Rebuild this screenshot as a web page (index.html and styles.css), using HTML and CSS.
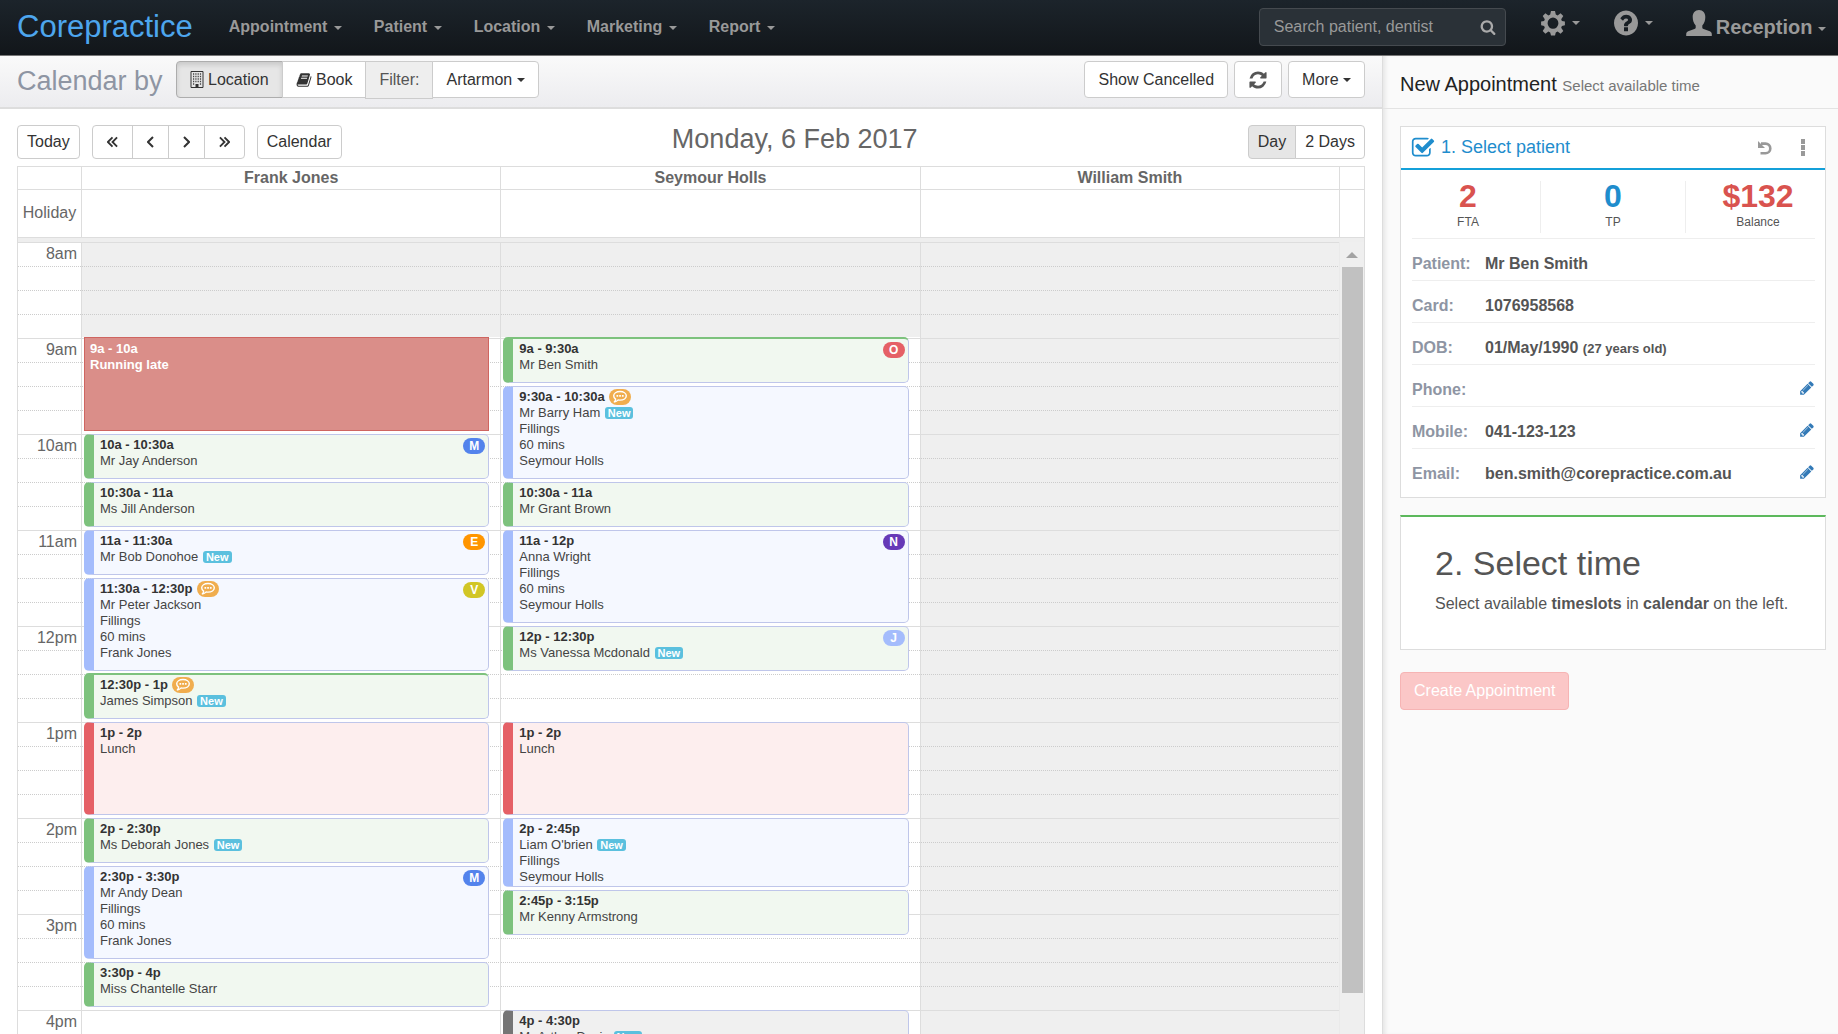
FILE: index.html
```html
<!DOCTYPE html>
<html lang="en">
<head>
<meta charset="utf-8">
<title>Corepractice - Calendar</title>
<link rel="stylesheet" href="styles.css">
</head>
<body>

<svg class="sprite" aria-hidden="true">
	<symbol id="pencil" viewBox="0 0 1792 1792"><path d="M491 1536l91-91-235-235-91 91v107h128v128h107zm523-928q0-22-22-22-10 0-17 7l-542 542q-7 7-7 17 0 22 22 22 10 0 17-7l542-542q7-7 7-17zm-54-192l416 416-832 832h-416v-416zm683 96q0 53-37 90l-166 166-416-416 166-165q36-38 90-38 53 0 91 38l235 234q37 39 37 91z"/></symbol>
	<symbol id="comment" viewBox="0 0 16 14"><path d="M8 1.500c3.600 0 6.300 1.900 6.300 4.300S11.600 10.100 8 10.100c-.6 0-1.200-.1-1.800-.2C5 11.200 3.700 11.800 2.300 12c.8-.8 1.200-1.600 1.300-2.800C2.400 8.400 1.700 7.200 1.700 5.800 1.700 3.400 4.400 1.500 8 1.500z" fill="none" stroke="#fff" stroke-width="1.400"/><path d="M4.500 5h1.700v1.700H4.500zM7.200 5h1.700v1.700H7.200zM9.900 5h1.700v1.700H9.900z" fill="#fff"/></symbol>
</svg>

<nav class="navbar">
	<a class="brand" href="#">Corepractice</a>
	<div class="menu">
		<a href="#">Appointment <i class="caret"></i></a>
		<a href="#">Patient <i class="caret"></i></a>
		<a href="#">Location <i class="caret"></i></a>
		<a href="#">Marketing <i class="caret"></i></a>
		<a href="#">Report <i class="caret"></i></a>
	</div>
	<form class="search" action="#">
		<input type="text" placeholder="Search patient, dentist" aria-label="Search patient, dentist">
		<button type="button" aria-label="Search"><svg width="16" height="16" viewBox="0 0 1792 1792"><path d="M1216 832q0-185-131.500-316.500t-316.500-131.500-316.500 131.500-131.500 316.500 131.500 316.500 316.500 131.500 316.500-131.500 131.500-316.500zm512 832q0 52-38 90t-90 38q-54 0-90-38l-343-342q-179 124-399 124-143 0-273.500-55.500t-225-150-150-225-55.500-273.500 55.500-273.500 150-225 225-150 273.500-55.500 273.500 55.500 225 150 150 225 55.500 273.500q0 220-124 399l343 343q37 37 37 90z"/></svg></button>
	</form>
	<div class="tools">
		<a href="#" aria-label="Settings"><svg width="24" height="26" viewBox="0 0 24 26"><path fill-rule="evenodd" d="M10 1h4l.8 3.600 1.800.8 3-2.200 2.700 2.900-2.100 3.200.7 1.700 3 .6v3.600l-3 .7-.7 1.800 2.100 3.200-2.700 2.800-3-2.100-1.800.8L14 25.500h-4l-.8-3.100-1.800-.8-3 2.100-2.700-2.800 2.100-3.200-.7-1.800-3-.7v-3.600l3-.6.700-1.700L1.700 6.100l2.700-2.900 3 2.200 1.800-.8zM12 7.600a5.400 5.600 0 1 0 0 11.200 5.400 5.600 0 1 0 0-11.200z"/></svg><i class="caret"></i></a>
		<a href="#" aria-label="Help"><svg width="24" height="26" viewBox="128 100 1536 1592" preserveAspectRatio="none"><path d="M1024 1376v-192q0-14-9-23t-23-9h-192q-14 0-23 9t-9 23v192q0 14 9 23t23 9h192q14 0 23-9t9-23zm256-672q0-88-55.500-163t-138.500-116-170-41q-243 0-371 213-15 24 8 42l132 100q7 6 19 6 16 0 25-12 53-68 86-92 34-24 86-24 48 0 85.500 26t37.500 59q0 38-20 61t-68 45q-63 28-115.500 86.500t-52.500 125.500v36q0 14 9 23t23 9h192q14 0 23-9t9-23q0-19 21.500-49.500t54.500-49.500q32-18 49-28.500t46-35 44.500-48 28-60.500 12.500-81zm384 192q0 209-103 385.500t-279.500 279.500-385.500 103-385.500-103-279.500-279.500-103-385.500 103-385.500 279.500-279.500 385.500-103 385.500 103 279.500 279.500 103 385.500z"/></svg><i class="caret"></i></a>
	</div>
	<a class="user" href="#"><svg width="26" height="26" viewBox="0 0 26 26"><path d="M13 0c4 0 6.300 2.900 6.300 7 0 3.400-1 6.300-3 8.400v2c0 .8.500 1.300 1.300 1.600l5.500 2c1.800.7 2.700 1.600 2.700 3.200V26H.2v-1.800c0-1.600.9-2.500 2.700-3.200l5.500-2c.8-.3 1.300-.8 1.300-1.600v-2c-2-2.100-3-5-3-8.400 0-4.100 2.300-7 6.300-7z"/></svg><span>Reception <i class="caret"></i></span></a>
</nav>

<div class="page">
<main>
	<header class="pagebar">
		<h1>Calendar by</h1>
		<div class="group">
			<button class="btn active" type="button"><svg width="14" height="17" viewBox="0 0 14 17"><path d="M1 .5h12v16H1z" fill="none" stroke="#333"/><path d="M3 3h1.200M5.300 3h1.200M7.600 3h1.200M9.900 3h1.200M3 5.500h1.200M5.300 5.500h1.200M7.600 5.500h1.200M9.900 5.500h1.200M3 8h1.200M5.300 8h1.200M7.600 8h1.200M9.900 8h1.200M3 10.500h1.200M5.300 10.500h1.200M7.600 10.500h1.200M9.900 10.500h1.200M3 13h1.200M9.900 13h1.200" stroke="#444" stroke-width="1.300"/><path d="M5.500 13h3v4h-3z"/></svg> Location</button>
			<button class="btn" type="button"><svg width="16" height="16" viewBox="0 0 1792 1792"><path d="M1703 478q40 57 18 129l-275 906q-19 64-76.500 107.500t-122.500 43.500h-923q-77 0-148.500-53.500t-99.500-131.500q-24-67-2-127 0-4 3-27t4-37q1-8-3-21.500t-3-19.500q2-11 8-21t16.500-23.500 16.500-23.500q23-38 45-91.500t30-91.500q3-10 .5-30t-.5-28q3-11 17-28t17-23q21-36 42-92t25-90q1-9-2.500-32t.5-28q4-13 22-30.500t22-22.500q19-26 42.500-84.500t27.500-96.500q1-8-3-25.500t-2-26.500q2-8 9-18t18-23 17-21q8-12 16.500-30.500t15-35 16-36 19.500-32 26.500-23.500 36-11.500 47.500 5.500l-1 3q38-9 51-9h761q74 0 114 56t18 130l-274 906q-36 119-71.500 153.500t-128.500 34.500h-869q-27 0-38 15-11 16-1 43 24 70 144 70h923q29 0 56-15.500t35-41.500l300-987q7-22 5-57 38 15 59 43zm-1064 2q-4 13 2 22.500t20 9.500h608q13 0 25.500-9.500t16.500-22.500l21-64q4-13-2-22.500t-20-9.500h-608q-13 0-25.500 9.500t-16.500 22.500zm-83 256q-4 13 2 22.500t20 9.500h608q13 0 25.500-9.500t16.500-22.500l21-64q4-13-2-22.500t-20-9.500h-608q-13 0-25.500 9.500t-16.500 22.500z"/></svg> Book</button>
			<span class="addon">Filter:</span>
			<button class="btn" type="button">Artarmon <i class="caret"></i></button>
		</div>
		<div class="actions">
			<button class="btn" type="button">Show Cancelled</button>
			<button class="btn" type="button" aria-label="Refresh"><svg width="20" height="20" viewBox="0 0 1792 1792"><path d="M1639 1056q0 5-1 7-64 268-268 434.500t-478 166.500q-146 0-282.500-55t-243.500-157l-129 129q-19 19-45 19t-45-19-19-45v-448q0-26 19-45t45-19h448q26 0 45 19t19 45-19 45l-137 137q71 66 161 102t187 36q134 0 250-65t186-179q11-17 53-117 8-23 30-23h192q13 0 22.500 9.500t9.500 22.500zm25-800v448q0 26-19 45t-45 19h-448q-26 0-45-19t-19-45 19-45l138-138q-148-137-349-137-134 0-250 65t-186 179q-11 17-53 117-8 23-30 23h-199q-13 0-22.500-9.500t-9.500-22.500v-7q65-268 270-434.500t480-166.500q146 0 284 55.500t245 156.500l130-129q19-19 45-19t45 19 19 45z"/></svg></button>
			<button class="btn" type="button">More <i class="caret"></i></button>
		</div>
	</header>

	<section class="calendar">
		<div class="toolbar">
			<div class="left">
				<button class="btn small" type="button">Today</button>
				<div class="group arrows">
					<button class="btn small" type="button" aria-label="Back a week"><svg width="11" height="12" viewBox="0 0 12 12"><path d="M6 1L1 6l5 5M11 1L6 6l5 5"/></svg></button>
					<button class="btn small" type="button" aria-label="Back a day"><svg width="7" height="12" viewBox="0 0 7 12"><path d="M6 1L1 6l5 5"/></svg></button>
					<button class="btn small" type="button" aria-label="Forward a day"><svg width="7" height="12" viewBox="0 0 7 12"><path d="M1 1l5 5-5 5"/></svg></button>
					<button class="btn small" type="button" aria-label="Forward a week"><svg width="11" height="12" viewBox="0 0 12 12"><path d="M1 1l5 5-5 5M6 1l5 5-5 5"/></svg></button>
				</div>
				<button class="btn small" type="button">Calendar</button>
			</div>
			<h2>Monday, 6 Feb 2017</h2>
			<div class="group">
				<button class="btn small on" type="button">Day</button>
				<button class="btn small" type="button">2 Days</button>
			</div>
		</div>

		<table class="heads">
			<colgroup><col class="axis-col"><col><col><col><col class="gutter-col"></colgroup>
			<tr><td></td><th>Frank Jones</th><th>Seymour Holls</th><th>William Smith</th><td></td></tr>
			<tr class="holiday"><td>Holiday</td><td></td><td></td><td></td><td></td></tr>
		</table>
		<div class="divider"></div>

		<div class="grid">
			<div class="axis lines">
				<span>8am</span><span>9am</span><span>10am</span><span>11am</span><span>12pm</span><span>1pm</span><span>2pm</span><span>3pm</span><span>4pm</span>
			</div>

			<div class="day lines">
				<div class="event late" style="grid-row: 5 / span 4"><b>9a - 10a</b><b>Running late</b></div>
				<div class="event green" style="grid-row: 9 / span 2"><b>10a - 10:30a</b><span>Mr Jay Anderson</span><i class="tag m">M</i></div>
				<div class="event green" style="grid-row: 11 / span 2"><b>10:30a - 11a</b><span>Ms Jill Anderson</span></div>
				<div class="event blue" style="grid-row: 13 / span 2"><b>11a - 11:30a</b><span>Mr Bob Donohoe <em>New</em></span><i class="tag e">E</i></div>
				<div class="event blue" style="grid-row: 15 / span 4"><b>11:30a - 12:30p<svg class="note"><use href="#comment"/></svg></b><span>Mr Peter Jackson</span><span>Fillings</span><span>60 mins</span><span>Frank Jones</span><i class="tag v">V</i></div>
				<div class="event green topped" style="grid-row: 19 / span 2"><b>12:30p - 1p<svg class="note"><use href="#comment"/></svg></b><span>James Simpson <em>New</em></span></div>
				<div class="event red" style="grid-row: 21 / span 4"><b>1p - 2p</b><span>Lunch</span></div>
				<div class="event green" style="grid-row: 25 / span 2"><b>2p - 2:30p</b><span>Ms Deborah Jones <em>New</em></span></div>
				<div class="event blue" style="grid-row: 27 / span 4"><b>2:30p - 3:30p</b><span>Mr Andy Dean</span><span>Fillings</span><span>60 mins</span><span>Frank Jones</span><i class="tag m">M</i></div>
				<div class="event green" style="grid-row: 31 / span 2"><b>3:30p - 4p</b><span>Miss Chantelle Starr</span></div>
			</div>

			<div class="day lines">
				<div class="event green topped" style="grid-row: 5 / span 2"><b>9a - 9:30a</b><span>Mr Ben Smith</span><i class="tag o">O</i></div>
				<div class="event blue" style="grid-row: 7 / span 4"><b>9:30a - 10:30a<svg class="note"><use href="#comment"/></svg></b><span>Mr Barry Ham <em>New</em></span><span>Fillings</span><span>60 mins</span><span>Seymour Holls</span></div>
				<div class="event green" style="grid-row: 11 / span 2"><b>10:30a - 11a</b><span>Mr Grant Brown</span></div>
				<div class="event blue" style="grid-row: 13 / span 4"><b>11a - 12p</b><span>Anna Wright</span><span>Fillings</span><span>60 mins</span><span>Seymour Holls</span><i class="tag n">N</i></div>
				<div class="event green" style="grid-row: 17 / span 2"><b>12p - 12:30p</b><span>Ms Vanessa Mcdonald <em>New</em></span><i class="tag j">J</i></div>
				<div class="event red" style="grid-row: 21 / span 4"><b>1p - 2p</b><span>Lunch</span></div>
				<div class="event blue" style="grid-row: 25 / span 3"><b>2p - 2:45p</b><span>Liam O'brien <em>New</em></span><span>Fillings</span><span>Seymour Holls</span></div>
				<div class="event green" style="grid-row: 28 / span 2"><b>2:45p - 3:15p</b><span>Mr Kenny Armstrong</span></div>
				<div class="event gray" style="grid-row: 33 / span 2"><b>4p - 4:30p</b><span>Mr Arthur Davis <em>New</em></span></div>
			</div>

			<div class="day lines off"></div>

			<div class="scroll"><i class="up"></i><i class="thumb"></i></div>
		</div>
	</section>
</main>

<aside>
	<h2 class="side-title">New Appointment <small>Select available time</small></h2>

	<section class="card patient">
		<header>
			<svg class="check" width="24" height="24" viewBox="0 0 1792 1792"><path d="M1472 930v318q0 119-84.500 203.500t-203.500 84.500h-832q-119 0-203.500-84.500t-84.500-203.500v-832q0-119 84.500-203.500t203.500-84.500h832q63 0 117 25 15 7 18 23 3 17-9 29l-49 49q-10 10-23 10-3 0-9-2-23-6-45-6h-832q-66 0-113 47t-47 113v832q0 66 47 113t113 47h832q66 0 113-47t47-113v-254q0-13 9-22l64-64q10-10 23-10 6 0 12 3 20 8 20 29zm231-489l-814 814q-24 24-57 24t-57-24l-430-430q-24-24-24-57t24-57l110-110q24-24 57-24t57 24l263 263 647-647q24-24 57-24t57 24l110 110q24 24 24 57t-24 57z"/></svg>
			<h3>1. Select patient</h3>
			<button type="button" aria-label="Reset"><svg width="16" height="16" viewBox="0 0 16 16"><path d="M4 3.600h4.500a4.800 4.800 0 0 1 0 9.600H3.500" fill="none" stroke="#999" stroke-width="2.600"/><path d="M1 1v7h7z"/></svg></button>
			<button type="button" aria-label="Options"><svg width="6" height="18" viewBox="0 0 6 18"><path d="M1 0h4v5H1zM1 6h4v5H1zM1 12h4v5H1z"/></svg></button>
		</header>
		<div class="stats">
			<div><strong>2</strong>FTA</div>
			<div><strong class="tp">0</strong>TP</div>
			<div><strong>$132</strong>Balance</div>
		</div>
		<dl>
			<div><dt>Patient:</dt><dd>Mr Ben Smith</dd></div>
			<div><dt>Card:</dt><dd>1076958568</dd></div>
			<div><dt>DOB:</dt><dd>01/May/1990 <small>(27 years old)</small></dd></div>
			<div><dt>Phone:</dt><dd></dd><a href="#" aria-label="Edit phone"><svg width="16" height="16"><use href="#pencil"/></svg></a></div>
			<div><dt>Mobile:</dt><dd>041-123-123</dd><a href="#" aria-label="Edit mobile"><svg width="16" height="16"><use href="#pencil"/></svg></a></div>
			<div><dt>Email:</dt><dd>ben.smith@corepractice.com.au</dd><a href="#" aria-label="Edit email"><svg width="16" height="16"><use href="#pencil"/></svg></a></div>
		</dl>
	</section>

	<section class="card time">
		<h3>2. Select time</h3>
		<p>Select available <b>timeslots</b> in <b>calendar</b> on the left.</p>
	</section>

	<button class="create" type="button" disabled>Create Appointment</button>
</aside>
</div>

</body>
</html>
```
FILE: styles.css
```css
*{
box-sizing: border-box;
}
body{
margin: 0;
height: 100vh;
display: flex;
flex-direction: column;
overflow: hidden;
background: #fff;
color: #333;
font-family: "Liberation Sans", Arial, sans-serif;
font-size: 16px;
}
h1, h2, h3, p, dl, dd{
margin: 0;
font-weight: normal;
}
a{
text-decoration: none;
}
svg{
fill: currentColor;
}
.sprite{
display: none;
}
button, input{
font: inherit;
}
.caret{
display: inline-block;
border-top: 4px solid;
border-left: 4px solid transparent;
border-right: 4px solid transparent;
vertical-align: middle;
}

/* top bar */
.navbar{
flex: none;
display: flex;
height: 56px;
padding: 0 12px 0 17px;
background: linear-gradient(#1c242b, #12161a);
border-bottom: 1px solid #777;
}
.navbar a{
color: #999;
font-weight: bold;
}
.navbar .brand{
color: #4da6ee;
font-size: 31px;
font-weight: normal;
line-height: 54px;
margin-right: 20px;
}
.menu{
display: flex;
flex: 1;
}
.menu a{
padding: 0 16px;
line-height: 54px;
}
.menu .caret{
margin-left: 2px;
}
.search{
display: flex;
align-items: center;
width: 247px;
height: 38px;
margin: 8px 35px 0 0;
background: #2a3137;
border: 1px solid #454a4f;
border-radius: 4px;
}
.search input{
flex: 1;
min-width: 0;
padding: 0 0 0 14px;
background: none;
border: 0;
outline: 0;
color: #999;
}
.search input::placeholder{
color: #999;
opacity: 1;
}
.search button{
display: flex;
padding: 0 9px;
background: none;
border: 0;
color: #aaa;
}
.tools{
display: flex;
gap: 34px;
margin: 10px 33px 0 0;
}
.tools a{
display: flex;
align-items: flex-start;
gap: 7px;
}
.tools .caret{
margin-top: 11px;
}
.navbar .user{
display: flex;
align-items: flex-start;
gap: 4px;
padding-top: 10px;
font-size: 20px;
}
.user span{
line-height: 34px;
}

/* layout */
.page{
flex: 1;
min-height: 0;
display: flex;
}
main{
flex: 1;
min-width: 0;
display: flex;
flex-direction: column;
}
.pagebar{
flex: none;
display: flex;
align-items: flex-start;
height: 53px;
padding: 5px 17px 0;
background: linear-gradient(#fafafa, #ececef);
border-bottom: 2px solid #ddd;
}
.pagebar h1{
margin-right: 13px;
color: #8e95a3;
font-size: 27px;
line-height: 40px;
}
.btn{
height: 37px;
padding: 0 13px;
background: #fff;
border: 1px solid #ccc;
border-radius: 4px;
color: #333;
white-space: nowrap;
}
.btn svg{
vertical-align: -3px;
}
.btn.small{
height: 34px;
padding: 0 9px;
}
.btn.active{
background: #e6e6e6;
border-color: #adadad;
box-shadow: inset 0 3px 5px rgba(0,0,0,.125);
}
.btn.on{
background: #e6e6e6;
}
.group{
display: flex;
}
.group > * + *{
margin-left: -1px;
}
.group > :not(:first-child){
border-top-left-radius: 0;
border-bottom-left-radius: 0;
}
.group > :not(:last-child){
border-top-right-radius: 0;
border-bottom-right-radius: 0;
}
.addon{
height: 38px;
padding: 0 13px;
background: #eee;
border: 1px solid #ccc;
color: #555;
line-height: 35px;
}
.actions{
display: flex;
gap: 6px;
margin-left: auto;
}
.actions svg{
color: #555;
vertical-align: -5px;
}

/* calendar */
.calendar{
flex: 1;
min-height: 0;
display: flex;
flex-direction: column;
padding: 16px 17px 0;
}
.toolbar{
display: flex;
justify-content: space-between;
height: 41px;
}
.toolbar h2{
color: #666;
font-size: 27px;
line-height: 29px;
}
.left{
display: flex;
gap: 12px;
}
.arrows .btn{
padding: 0 14px;
}
.arrows svg{
fill: none;
stroke: #333;
stroke-width: 2;
vertical-align: -1px;
}
.heads{
width: 100%;
table-layout: fixed;
border-collapse: separate;
border-spacing: 0;
border: solid #ddd;
border-width: 1px 1px 0;
color: #666;
}
.heads .axis-col{
width: 64px;
}
.heads .gutter-col{
width: 24px;
}
.heads td, .heads th{
height: 23px;
padding: 0;
border: solid #ddd;
border-width: 0 1px 1px 0;
text-align: center;
white-space: nowrap;
}
.heads tr > :last-child{
border-right: 0;
}
.heads .holiday td{
height: 48px;
padding-bottom: 2px;
}
.divider{
flex: none;
height: 4px;
background: #eee;
border: solid #ddd;
border-width: 0 1px;
}
.grid{
flex: 1;
min-height: 0;
display: grid;
grid-template-columns: 64px repeat(3, 1fr) 24px;
grid-template-rows: 100%;
overflow: hidden;
border: solid #ddd;
border-width: 0 1px;
}
.lines{
--off: linear-gradient(transparent, transparent);
background-image: linear-gradient(#ddd 1px, transparent 1px), conic-gradient(from 270deg at 1px 1px, #ccc 90deg, transparent 0), var(--off);
background-size: 100% 96px, 2px 24px, 100% 100%;
border-right: 1px solid #ddd;
}
.axis{
color: #666;
text-align: right;
}
.axis span{
display: block;
height: 96px;
padding-right: 4px;
line-height: 24px;
}
.day{
--off: linear-gradient(#efefef 95px, #fff 95px);
display: grid;
grid-template-rows: repeat(34, 24px);
min-width: 0;
}
.day.off{
background-color: #efefef;
--off: linear-gradient(#efefef, #efefef);
border-right-color: #eaeaea;
}
.scroll{
display: flex;
flex-direction: column;
align-items: center;
background: #efefef;
}
.up{
flex: none;
margin: 10px 0 9px;
border-bottom: 6px solid #a3a3a3;
border-left: 6px solid transparent;
border-right: 6px solid transparent;
}
.thumb{
flex: 1;
width: 21px;
margin-bottom: 41px;
background: #c1c1c1;
}

/* events */
.event{
position: relative;
margin: 0 11px 3px 2px;
padding: 2px 0 0 6px;
background: #f5f8ff;
background-clip: padding-box;
border: 1px solid #bfc6ea;
border-left: 10px solid #a4bcfc;
border-radius: 5px;
color: #444;
font-size: 13px;
line-height: 16px;
overflow: hidden;
}
.event > b, .event > span{
display: block;
height: 16px;
}
.event > b{
color: #333;
}
.green{
background-color: #f1f8f0;
border-left-color: #7dc27d;
}
.red{
background-color: #fdeeee;
border-left-color: #e56066;
}
.gray{
background-color: #f0f0f0;
border-left-color: #757575;
}
.topped{
margin-top: -1px;
border-top: 2px solid #7dc27d;
}
.late{
margin-top: -1px;
padding: 3px 5px;
background: #da8e89;
border: 1px solid #cf6560;
border-radius: 0;
}
.late > b{
color: #fff;
}
.event em{
display: inline-block;
height: 12px;
margin-left: 1px;
padding: 0 3px;
background: #5bc0de;
border-radius: 3px;
color: #fff;
font-size: 11px;
font-style: normal;
font-weight: bold;
line-height: 12px;
}
.note{
width: 22px;
height: 16px;
padding: 1px 3px;
margin-left: 4px;
background: #f0ad4e;
border-radius: 8px;
vertical-align: top;
}
.tag{
position: absolute;
top: 3px;
right: 3px;
width: 22px;
height: 16px;
border-radius: 8px;
color: #fff;
font-size: 12px;
font-style: normal;
font-weight: bold;
line-height: 16px;
text-align: center;
}
.m{ background: #5383ec; }
.e{ background: #ff9500; }
.v{ background: #d1c626; }
.o{ background: #e56066; }
.n{ background: #6639b7; }
.j{ background: #a4bcfc; }

/* side panel */
aside{
width: 456px;
padding: 0 12px 0 17px;
background: #fafafa;
border-left: 1px solid #ddd;
box-shadow: inset 4px 0 4px -2px #e4e4e4;
}
.side-title{
height: 53px;
margin: 0 -12px 17px -17px;
padding-left: 17px;
border-bottom: 1px solid #e3e3e3;
color: #222;
font-size: 20px;
line-height: 56px;
}
.side-title small{
color: #777;
font-size: 15px;
}
.card{
background: #fff;
border: 1px solid #ddd;
}
.patient header{
display: flex;
align-items: center;
height: 43px;
padding: 0 19px 0 10px;
border-bottom: 2px solid #14a0d9;
color: #1f8dcd;
}
.patient h3{
flex: 1;
margin-left: 6px;
font-size: 18px;
}
.patient header button{
display: flex;
padding: 0;
margin-left: 27px;
background: none;
border: 0;
color: #999;
}
.stats{
display: flex;
margin: 11px -5px 5px;
color: #555;
font-size: 12px;
text-align: center;
}
.stats div{
flex: 1;
height: 52px;
line-height: 20px;
}
.stats div + div{
border-left: 1px solid #eee;
}
.stats strong{
display: block;
color: #d9534f;
font-size: 32px;
line-height: 31px;
}
.stats .tp{
color: #1f8dcd;
}
dl{
margin: 0 10px 0 11px;
padding-bottom: 7px;
color: #555;
font-weight: bold;
}
dl > div{
display: flex;
height: 42px;
padding-top: 8px;
border-top: 1px solid #eee;
line-height: 34px;
}
dt{
width: 73px;
color: #8e95a3;
}
dd{
flex: 1;
font-weight: bold;
}
dd small{
font-size: 13px;
}
dl a{
color: #337ab7;
line-height: 28px;
}
dl a svg{
vertical-align: middle;
}
.time{
margin: 17px 0 22px;
height: 135px;
padding: 25px 34px 0;
border-top: 2px solid #5cb85c;
color: #555;
}
.time h3{
font-size: 34px;
line-height: 42px;
}
.time p{
margin-top: 10px;
line-height: 20px;
}
.create{
height: 38px;
padding: 0 13px;
background: #fbc7c7;
border: 1px solid #f6b4b4;
border-radius: 4px;
color: #fff;
}
```
